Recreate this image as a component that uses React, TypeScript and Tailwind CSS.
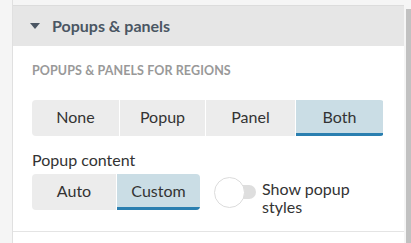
import { useState } from "react";

function Segmented({ options, value, onChange, widths }: { options: string[]; value: string; onChange: (v: string) => void; widths: string[] }) {
    return <div className="flex h-[36px] rounded-[4px] overflow-hidden">
        {options.map((o, i) => {
            const active = o === value
            return <button
                key={o}
                onClick={() => onChange(o)}
                className={`${widths[i]} ${i > 0 ? "ml-px" : ""} flex items-center justify-center text-[16px] text-[#333] border-b-[3px] ${active ? "bg-[#cadde5] border-[#2a7fb0]" : "bg-[#ececec] border-transparent"}`}
            >
                <span className="mt-[2px]">{o}</span>
            </button>
        })}
    </div>
}

export default function App() {
    const [regions, setRegions] = useState("Both")
    const [content, setContent] = useState("Custom")
    const [styles, setStyles] = useState(false)

    return <div className="w-[411px] h-[243px] flex bg-[#f5f5f5] overflow-hidden" style={{ fontFamily: "Lato, 'Noto Sans', sans-serif" }}>
        <div className="w-[13px] border-r border-[#e0e0e0] shrink-0" />
        <div className="w-[391px] flex flex-col">
            <div className="h-[5px] border-b border-[#dcdcdc] box-content" />
            <div className="h-[40px] bg-[#e6e6e6] flex items-center pl-[17px] gap-[12px]">
                <svg width="10" height="6" viewBox="0 0 10 6"><path d="M0 0 L10 0 L5 6 Z" fill="#4b5663" /></svg>
                <span className="text-[16px] font-bold text-[#4b5663]">Popups &amp; panels</span>
            </div>
            <div className="bg-white flex-1 pl-[19px] pr-[20px] flex flex-col">
                <div className="mt-[16px] text-[12.5px] font-bold text-[#999] tracking-[0.1px]">POPUPS &amp; PANELS FOR REGIONS</div>
                <div className="mt-[19px]">
                    <Segmented options={["None", "Popup", "Panel", "Both"]} value={regions} onChange={setRegions} widths={["w-[87px]", "w-[85px]", "w-[89px]", "w-[87px]"]} />
                </div>
                <div className="mt-[14px] text-[16px] text-[#333] leading-[20px]">Popup content</div>
                <div className="mt-[4px] flex items-start">
                    <Segmented options={["Auto", "Custom"]} value={content} onChange={setContent} widths={["w-[84px]", "w-[83px]"]} />
                    <button onClick={() => setStyles(!styles)} className="ml-[14px] mt-[3px] relative w-[42px] h-[31px] shrink-0">
                        <span className={`absolute left-[10px] top-[8px] w-[32px] h-[14px] rounded-full ${styles ? "bg-[#9cc3d8]" : "bg-[#dedede]"}`} />
                        <span className={`absolute top-0 w-[31px] h-[31px] rounded-full bg-white border border-[#dcdcdc] ${styles ? "left-[11px]" : "left-0"}`} />
                    </button>
                    <div className="ml-[6px] mt-[6px] text-[16px] text-[#333] leading-[18px]">Show popup<br />styles</div>
                </div>
                <div className="mt-auto mb-[11px] border-b border-[#e4e4e4] -mr-[20px] -ml-[19px]" />
            </div>
        </div>
        <div className="w-[7px] relative">
            <div className="absolute left-[2px] right-0 top-[9px] bottom-0 bg-[#c1c1c1]" />
        </div>
    </div>
}
